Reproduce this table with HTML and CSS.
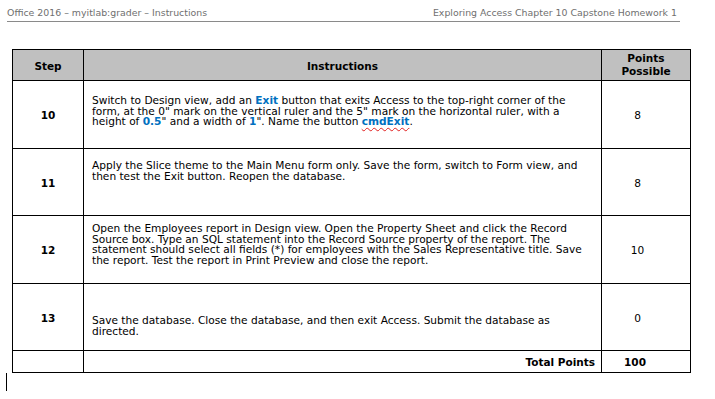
FILE: index.html
```html
<!DOCTYPE html>
<html lang="en">
<head>
<meta charset="utf-8">
<title>Exploring Access Chapter 10 Capstone Homework 1</title>
<link rel="stylesheet" href="styles.css">
</head>
<body>
<div class="page">
  <header class="page-header">
    <span class="hdr-left">Office 2016 – myitlab:grader – Instructions</span>
    <span class="hdr-right">Exploring Access Chapter 10 Capstone Homework 1</span>
  </header>

  <table class="steps">
    <colgroup>
      <col class="c-step">
      <col class="c-inst">
      <col class="c-pts">
    </colgroup>
    <thead>
      <tr class="r-head">
        <th class="th-low">Step</th>
        <th class="th-low">Instructions</th>
        <th>Points<br>Possible</th>
      </tr>
    </thead>
    <tbody>
      <tr class="r-a">
        <td class="step">10</td>
        <td class="inst"><p class="txt p10">Switch to Design view, add an <b class="hl">Exit</b> button that exits Access to the top-right corner of the<br>form, at the 0" mark on the vertical ruler and the 5" mark on the horizontal ruler, with a<br>height of <b class="hl">0.5</b>" and a width of <b class="hl">1</b>". Name the button <b class="hl spell">cmdExit</b>.</p></td>
        <td class="pts">8</td>
      </tr>
      <tr class="r-b">
        <td class="step">11</td>
        <td class="inst"><p class="txt p11">Apply the Slice theme to the Main Menu form only. Save the form, switch to Form view, and<br>then test the Exit button. Reopen the database.</p></td>
        <td class="pts">8</td>
      </tr>
      <tr class="r-a">
        <td class="step">12</td>
        <td class="inst"><p class="txt p12">Open the Employees report in Design view. Open the Property Sheet and click the Record<br>Source box. Type an SQL statement into the Record Source property of the report. The<br>statement should select all fields (*) for employees with the Sales Representative title. Save<br>the report. Test the report in Print Preview and close the report.</p></td>
        <td class="pts">10</td>
      </tr>
      <tr class="r-b">
        <td class="step">13</td>
        <td class="inst"><p class="txt p13">Save the database. Close the database, and then exit Access. Submit the database as<br>directed.</p></td>
        <td class="pts">0</td>
      </tr>
      <tr class="r-total">
        <td></td>
        <td class="total-label">Total Points</td>
        <td class="total-val">100</td>
      </tr>
    </tbody>
  </table>
  <div class="caret"></div>
</div>
</body>
</html>
```

FILE: styles.css
```css
html, body {
  margin: 0;
  padding: 0;
  background: #ffffff;
}

.page {
  font-family: "DejaVu Sans", Verdana, sans-serif;
  color: #000;
}

.page-header {
  display: flex;
  justify-content: space-between;
  align-items: flex-end;
  width: 670px;
  height: 21px;
  margin-left: 7px;
  padding-right: 3px;
  border-bottom: 1px solid #8a8a8a;
  font-size: 9.4px;
  color: #6f6f6f;
  line-height: 12px;
}

.hdr-left, .hdr-right {
  padding-bottom: 2px;
}

.steps {
  border-collapse: collapse;
  margin: 27px 0 0 12px;
  width: 678px;
  table-layout: fixed;
  font-size: 10.6px;
}

.c-step { width: 71px; }
.c-inst { width: 518px; }
.c-pts { width: 89px; }

.steps th,
.steps td {
  border: 1px solid #000;
  padding: 0;
}

.steps th {
  background: #c0c0c0;
  font-weight: bold;
  font-size: 10.5px;
  line-height: 13.5px;
  text-align: center;
  vertical-align: middle;
}

.steps th.th-low {
  padding-top: 3px;
}

.r-head { height: 31px; }
.r-a { height: 68px; }
.r-b { height: 67px; }
.r-total { height: 22px; }

.step {
  text-align: center;
  vertical-align: middle;
  font-weight: bold;
  font-size: 10.5px;
  padding-top: 1px !important;
}

.pts {
  text-align: center;
  vertical-align: middle;
  padding: 1px 17px 0 0 !important;
}

.inst {
  vertical-align: top;
}

.txt {
  margin: 0;
  padding-left: 8px;
  line-height: 10.6px;
  white-space: nowrap;
}

.p10 { padding-top: 14px; }
.p11 { padding-top: 11px; }
.p12 { padding-top: 7px; }
.p13 { padding-top: 31px; }

.hl {
  color: #0070c0;
  font-weight: bold;
}

.spell {
  text-decoration: underline wavy #e02020;
  text-decoration-thickness: 1px;
  text-underline-offset: 2px;
}

.total-label {
  text-align: right;
  font-weight: bold;
  font-size: 10.5px;
  padding-right: 6px !important;
  vertical-align: middle;
}

.total-val {
  text-align: center;
  font-weight: bold;
  font-size: 10.5px;
  padding-right: 22px !important;
  vertical-align: middle;
}

.caret {
  width: 1px;
  height: 18px;
  margin-left: 6px;
  background: #000;
}
```
